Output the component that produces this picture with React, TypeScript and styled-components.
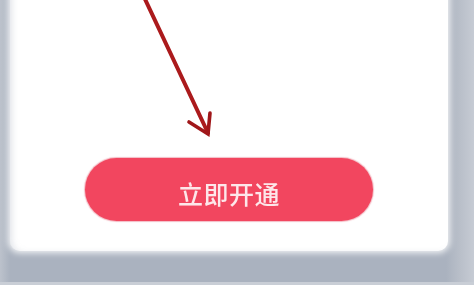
import React from "react";
import styled, { createGlobalStyle } from "styled-components";

const Global = createGlobalStyle`
  html, body { margin: 0; padding: 0; background: #aeb5c1; }
  body { width: 474px; height: 285px; overflow: hidden; }
`;

const Page = styled.div`
  position: relative;
  width: 474px;
  height: 291px;
  margin-top: -6px;
  box-sizing: border-box;
  padding: 0 26px 34px 10px;
  background: linear-gradient(90deg, #bcc2cc 0px, #aab2bf 10px, #aab2bf 446px, #b9bfc9 460px, #c6cbd4 474px);
  display: flex;
  flex-direction: column;
  filter: blur(0.5px);
`;

const BottomStrip = styled.div`
  position: absolute;
  left: 0;
  right: 0;
  bottom: 0;
  height: 3px;
  background: #c9ced6;
`;

const Card = styled.div`
  position: relative;
  flex: 1;
  background: #ffffff;
  border-radius: 0 0 10px 10px;
  box-shadow: 0 0 6px 2px rgba(255, 255, 255, 0.85), inset 4px 0 6px -2px rgba(170, 178, 192, 0.35);
  display: flex;
  flex-direction: column;
  align-items: center;
  justify-content: flex-end;
  padding-bottom: 30px;
`;

const OpenButton = styled.button`
  width: 288px;
  height: 63px;
  border: none;
  border-radius: 32px;
  background: #f2465f;
  box-shadow: 0 0 1px 1px rgba(220, 60, 85, 0.35);
  color: #fde7ea;
  font-family: "Noto Sans CJK SC", "Noto Sans", sans-serif;
  font-size: 25px;
  font-weight: 500;
  letter-spacing: 0.5px;
  padding: 6px 0 0 0;
  display: flex;
  align-items: center;
  justify-content: center;
`;

const ArrowSvg = styled.svg`
  position: absolute;
  left: 0;
  top: 6px;
  width: 474px;
  height: 285px;
  pointer-events: none;
`;

function Arrow() {
  return (
    <ArrowSvg viewBox="0 0 474 285">
      <line x1="144" y1="-3" x2="208" y2="133" stroke="#ab1a1c" strokeWidth="4" strokeLinecap="round" />
      <polyline
        points="189,122 208,134 210,113"
        fill="none"
        stroke="#a0171a"
        strokeWidth="3.6"
        strokeLinecap="round"
        strokeLinejoin="miter"
      />
    </ArrowSvg>
  );
}

export default function App() {
  return (
    <>
      <Global />
      <Page>
        <Card>
          <OpenButton>立即开通</OpenButton>
        </Card>
        <BottomStrip />
        <Arrow />
      </Page>
    </>
  );
}
